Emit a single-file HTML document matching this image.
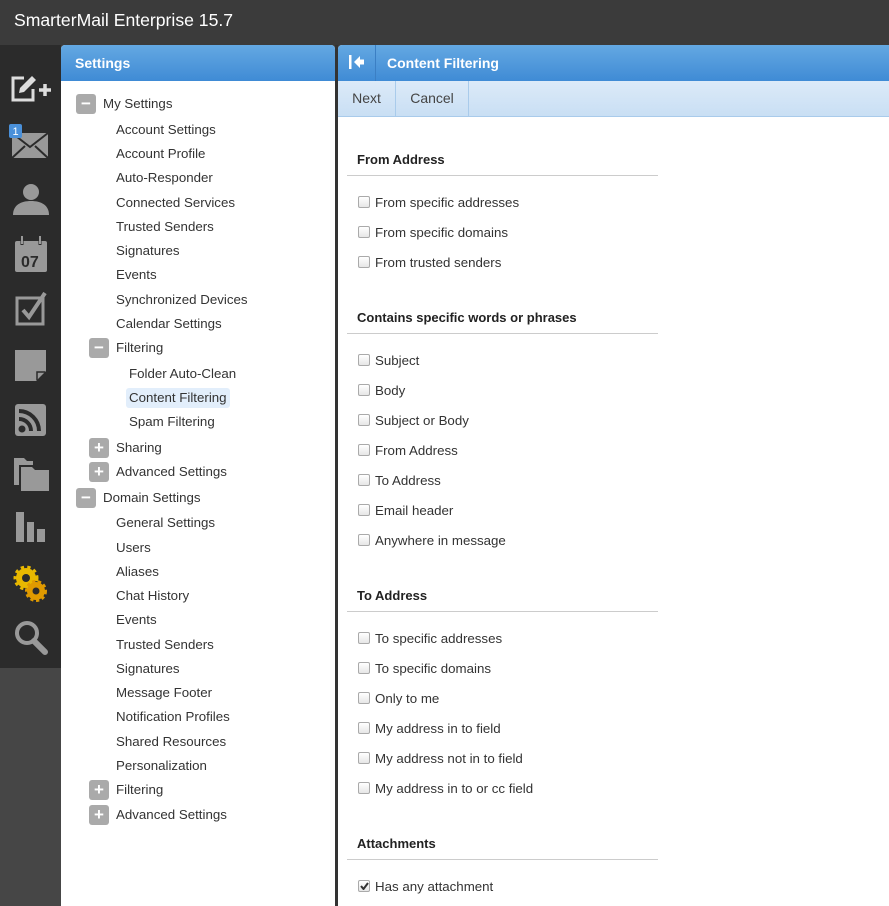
<!DOCTYPE html>
<html><head><meta charset="utf-8">
<style>
*{margin:0;padding:0;box-sizing:border-box}
body{width:889px;height:906px;overflow:hidden;background:#3c3c3c;font-family:"Liberation Sans",Arial,sans-serif;font-size:13px;color:#333;position:relative}
.a{position:absolute;white-space:nowrap}
#top{left:0;top:0;width:889px;height:45px;background:#3b3b3b}
#title{left:14px;top:10px;font-size:17.6px;color:#fff}
#side{left:0;top:45px;width:61px;height:623px;background:#2b2b2b}
#side2{left:0;top:668px;width:61px;height:238px;background:#464646}
#lp{left:61px;top:45px;width:274px;height:861px;background:#fff;border-radius:4px 4px 0 0;overflow:hidden}
.hd{background:linear-gradient(#64a8e2,#3f8bd5);height:36px;color:#fff;font-weight:bold;font-size:14px}
#div{left:335px;top:45px;width:3px;height:861px;background:#333}
#rp{left:338px;top:45px;width:551px;height:861px;background:#fff;border-radius:4px 0 0 0;overflow:hidden}
#tb{left:0;top:36px;width:551px;height:36px;background:linear-gradient(#dceaf8,#c9dff4);border-bottom:1px solid #a9cbeb}
.tbb{top:0;height:35px;line-height:34px;font-size:14px;color:#444;border-right:1px solid #a9cbeb;text-align:center}
.t{font-size:13.3px;color:#333}
.box{width:20px;height:20px;border-radius:3px;background:#aaa;color:#fff;font-weight:bold;text-align:center;line-height:19px;font-size:17px}
.h{font-weight:bold;font-size:13px;color:#222}
.ln{height:1px;background:#ccc;width:311px;left:9px}
.cb{width:12px;height:12px;border:1px solid #aaa;border-radius:2px;background:linear-gradient(#fff,#e6e6e6);left:20px}
.ct{left:37px;font-size:13.3px;color:#333}
svg{position:absolute}
</style></head><body>
<div class="a" id="top"></div>
<div class="a" id="title">SmarterMail Enterprise 15.7</div>
<div class="a" id="side"></div>
<div class="a" id="side2"></div>

<svg style="left:10px;top:76px" width="46" height="28" viewBox="0 0 46 28"><path d="M14 2H3v22h20V13" fill="none" stroke="#ddd" stroke-width="3"/><path d="M22 0l4 4-12 12-5 1 1-5z" fill="#ddd"/><path d="M35 8v12M29 14h12" stroke="#ddd" stroke-width="3.5"/></svg>
<svg style="left:9px;top:124px" width="42" height="36" viewBox="0 0 42 36"><path d="M3 9h36v25H3z" fill="#999"/><path d="M3 9l18 14 18-14M3 34l13-12M39 34L26 22" fill="none" stroke="#2b2b2b" stroke-width="2"/><rect x="0" y="0" width="13" height="14" rx="2" fill="#4a90d9"/><text x="3.5" y="11" font-size="11" fill="#fff" font-family="Liberation Sans">1</text></svg>
<svg style="left:12px;top:183px" width="38" height="32" viewBox="0 0 38 32"><circle cx="19" cy="9" r="8" fill="#999"/><path d="M1 32c0-10 8-14 18-14s18 4 18 14z" fill="#999"/></svg>
<svg style="left:14px;top:235px" width="34" height="38" viewBox="0 0 34 38"><rect x="1" y="6" width="32" height="31" rx="2" fill="#999"/><path d="M8 0v10M26 0v10" stroke="#2b2b2b" stroke-width="3"/><path d="M8 1v8M26 1v8" stroke="#999" stroke-width="2"/><text x="7" y="32" font-size="16" font-weight="bold" fill="#2b2b2b" font-family="Liberation Sans">07</text></svg>
<svg style="left:15px;top:292px" width="34" height="34" viewBox="0 0 34 34"><rect x="2" y="6" width="26" height="26" fill="none" stroke="#999" stroke-width="3"/><path d="M8 18l6 7L30 1" fill="none" stroke="#999" stroke-width="4"/></svg>
<svg style="left:15px;top:350px" width="31" height="31" viewBox="0 0 31 31"><path d="M0 0h31v21L21 31H0z" fill="#999"/><path d="M22 30V22h8" fill="none" stroke="#2b2b2b" stroke-width="1.5"/></svg>
<svg style="left:15px;top:404px" width="31" height="32" viewBox="0 0 31 32"><rect width="31" height="32" rx="3" fill="#999"/><circle cx="7" cy="25" r="3.5" fill="#2b2b2b"/><path d="M4 15a12 12 0 0 1 12 12M4 7a20 20 0 0 1 20 20" fill="none" stroke="#2b2b2b" stroke-width="4"/></svg>
<svg style="left:14px;top:458px" width="35" height="33" viewBox="0 0 35 33"><path d="M0 0h10l3 3h6v4H5v20H0z" fill="#999"/><path d="M7 9h11l3 3h14v21H7z" fill="#999"/></svg>
<svg style="left:16px;top:512px" width="30" height="30" viewBox="0 0 30 30"><rect x="0" y="0" width="8" height="30" fill="#999"/><rect x="11" y="10" width="7" height="20" fill="#999"/><rect x="21" y="17" width="8" height="13" fill="#999"/></svg>
<svg style="left:13px;top:564px" width="36" height="40" viewBox="0 0 36 40"><circle cx="13" cy="14" r="10" fill="#e8b800" stroke="#e8b800" stroke-width="5" stroke-dasharray="3 3"/><circle cx="13" cy="14" r="4" fill="#2b2b2b"/><circle cx="23" cy="27" r="9" fill="#e09a00" stroke="#e09a00" stroke-width="4" stroke-dasharray="3 2.5"/><circle cx="23" cy="27" r="3.5" fill="#2b2b2b"/></svg>
<svg style="left:14px;top:620px" width="34" height="36" viewBox="0 0 34 36"><circle cx="13" cy="13" r="10" fill="none" stroke="#999" stroke-width="4"/><path d="M20 21l11 11" stroke="#999" stroke-width="6" stroke-linecap="round"/></svg>

<div class="a" id="lp">
 <div class="hd" style="padding:10px 0 0 14px">Settings</div>
</div>
<div class="a" id="div"></div>

<div class="a box" style="left:76px;top:94px">−</div><div class="a t" style="left:103px;top:96px">My Settings</div>
<div class="a t" style="left:116px;top:122px">Account Settings</div>
<div class="a t" style="left:116px;top:146px">Account Profile</div>
<div class="a t" style="left:116px;top:170px">Auto-Responder</div>
<div class="a t" style="left:116px;top:195px">Connected Services</div>
<div class="a t" style="left:116px;top:219px">Trusted Senders</div>
<div class="a t" style="left:116px;top:243px">Signatures</div>
<div class="a t" style="left:116px;top:267px">Events</div>
<div class="a t" style="left:116px;top:292px">Synchronized Devices</div>
<div class="a t" style="left:116px;top:316px">Calendar Settings</div>
<div class="a box" style="left:89px;top:338px">−</div><div class="a t" style="left:116px;top:340px">Filtering</div>
<div class="a t" style="left:129px;top:366px">Folder Auto-Clean</div>
<div class="a" style="left:126px;top:388px;width:104px;height:20px;background:#e2eefb;border-radius:3px"></div>
<div class="a t" style="left:129px;top:390px">Content Filtering</div>
<div class="a t" style="left:129px;top:414px">Spam Filtering</div>
<div class="a box" style="left:89px;top:438px">+</div><div class="a t" style="left:116px;top:440px">Sharing</div>
<div class="a box" style="left:89px;top:462px">+</div><div class="a t" style="left:116px;top:464px">Advanced Settings</div>
<div class="a box" style="left:76px;top:488px">−</div><div class="a t" style="left:103px;top:490px">Domain Settings</div>
<div class="a t" style="left:116px;top:515px">General Settings</div>
<div class="a t" style="left:116px;top:540px">Users</div>
<div class="a t" style="left:116px;top:564px">Aliases</div>
<div class="a t" style="left:116px;top:588px">Chat History</div>
<div class="a t" style="left:116px;top:612px">Events</div>
<div class="a t" style="left:116px;top:637px">Trusted Senders</div>
<div class="a t" style="left:116px;top:661px">Signatures</div>
<div class="a t" style="left:116px;top:685px">Message Footer</div>
<div class="a t" style="left:116px;top:709px">Notification Profiles</div>
<div class="a t" style="left:116px;top:734px">Shared Resources</div>
<div class="a t" style="left:116px;top:758px">Personalization</div>
<div class="a box" style="left:89px;top:780px">+</div><div class="a t" style="left:116px;top:782px">Filtering</div>
<div class="a box" style="left:89px;top:805px">+</div><div class="a t" style="left:116px;top:807px">Advanced Settings</div>

<div class="a" id="rp">
 <div class="hd a" style="left:0;top:0;width:551px"></div>
 <div class="a" style="left:37px;top:0;width:1px;height:36px;background:#3b7fc4"></div>
 <svg style="left:11px;top:10px" width="16" height="14" viewBox="0 0 16 14"><rect x="0" y="0" width="2.5" height="14" fill="#fff"/><path d="M5 7l6-6v3.5h4v5h-4V13z" fill="#fff"/></svg>
 <div class="a" style="left:49px;top:10px;color:#fff;font-weight:bold;font-size:14px">Content Filtering</div>
 <div class="a" id="tb">
  <div class="a tbb" style="left:0;width:58px">Next</div>
  <div class="a tbb" style="left:58px;width:73px">Cancel</div>
 </div>

 <div class="a h" style="left:19px;top:107px">From Address</div><div class="a ln" style="top:130px"></div>
 <div class="a cb" style="top:151px"></div><div class="a ct" style="top:150px">From specific addresses</div>
 <div class="a cb" style="top:181px"></div><div class="a ct" style="top:180px">From specific domains</div>
 <div class="a cb" style="top:211px"></div><div class="a ct" style="top:210px">From trusted senders</div>

 <div class="a h" style="left:19px;top:265px">Contains specific words or phrases</div><div class="a ln" style="top:288px"></div>
 <div class="a cb" style="top:309px"></div><div class="a ct" style="top:308px">Subject</div>
 <div class="a cb" style="top:339px"></div><div class="a ct" style="top:338px">Body</div>
 <div class="a cb" style="top:369px"></div><div class="a ct" style="top:368px">Subject or Body</div>
 <div class="a cb" style="top:399px"></div><div class="a ct" style="top:398px">From Address</div>
 <div class="a cb" style="top:429px"></div><div class="a ct" style="top:428px">To Address</div>
 <div class="a cb" style="top:459px"></div><div class="a ct" style="top:458px">Email header</div>
 <div class="a cb" style="top:489px"></div><div class="a ct" style="top:488px">Anywhere in message</div>

 <div class="a h" style="left:19px;top:543px">To Address</div><div class="a ln" style="top:566px"></div>
 <div class="a cb" style="top:587px"></div><div class="a ct" style="top:586px">To specific addresses</div>
 <div class="a cb" style="top:617px"></div><div class="a ct" style="top:616px">To specific domains</div>
 <div class="a cb" style="top:647px"></div><div class="a ct" style="top:646px">Only to me</div>
 <div class="a cb" style="top:677px"></div><div class="a ct" style="top:676px">My address in to field</div>
 <div class="a cb" style="top:707px"></div><div class="a ct" style="top:706px">My address not in to field</div>
 <div class="a cb" style="top:737px"></div><div class="a ct" style="top:736px">My address in to or cc field</div>

 <div class="a h" style="left:19px;top:791px">Attachments</div><div class="a ln" style="top:814px"></div>
 <div class="a cb" style="top:835px"></div>
 <svg style="left:22px;top:837px" width="9" height="8" viewBox="0 0 9 8"><path d="M1 4l2.5 3L8 1" fill="none" stroke="#333" stroke-width="2"/></svg>
 <div class="a ct" style="top:834px">Has any attachment</div>
</div>
</body></html>
